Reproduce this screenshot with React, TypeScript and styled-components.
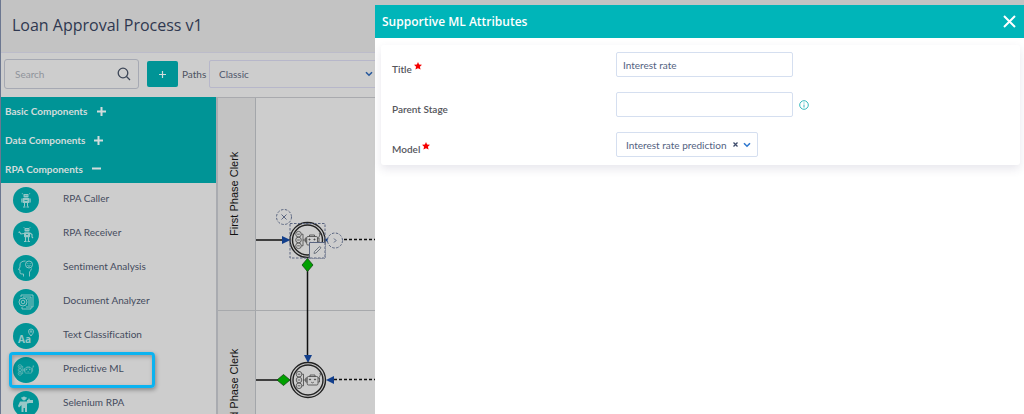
import React from "react";
import styled, { createGlobalStyle } from "styled-components";

const Global = createGlobalStyle`
  *, *::before, *::after { box-sizing: border-box; }
  body {
    margin: 0;
    font-family: Lato, "Open Sans", sans-serif;
    font-size: 10px;
    font-variant-ligatures: none;
    color: #2f3850;
  }
  button, input, select { font: inherit; font-variant-ligatures: none; color: inherit; }
`;

const Shell = styled.div`
  position: relative;
  display: flex;
  flex-direction: column;
  height: 100vh;
  overflow: hidden;
  background: #cdcdcd;
  border-left: 1px solid #6c7790;
`;

const PageHeader = styled.header`
  flex: none;
  display: flex;
  align-items: center;
  height: 53px;
  padding: 0 11px 2px;
  background: #c3c3c3;
  border-bottom: 1px solid #bcbcca;
`;

const PageTitle = styled.h1`
  margin: 0;
  font-family: "Open Sans", sans-serif;
  font-size: 16px;
  line-height: 24px;
  font-weight: 400;
  white-space: nowrap;
`;

const Toolbar = styled.div`
  flex: none;
  display: flex;
  align-items: center;
  height: 44px;
  padding: 0 4px 2px 3px;
`;

const SearchBox = styled.form`
  display: flex;
  align-items: center;
  width: 135px;
  height: 30px;
  padding: 0 7px 0 10px;
  border: 1px solid #a6a9b3;
  border-radius: 3px;
`;

const SearchInput = styled.input`
  flex: 1;
  min-width: 0;
  padding: 0;
  border: 0;
  outline: 0;
  background: none;
  &::placeholder { color: #8f939b; opacity: 1; }
`;

const PlainButton = styled.button`
  display: flex;
  padding: 0;
  border: 0;
  background: none;
  cursor: pointer;
`;

const AddButton = styled.button`
  display: flex;
  align-items: center;
  justify-content: center;
  width: 31px;
  height: 26px;
  margin: 0 4px 0 8px;
  padding: 0;
  border: 0;
  border-radius: 2px;
  background: #009496;
  color: #d5dcdc;
`;

const PathsLabel = styled.label`
  width: 27px;
  color: #4c5260;
`;

const SelectWrap = styled.div<{ $width: number; $gap: number }>`
  position: relative;
  display: flex;
  align-items: center;
  width: ${(p) => p.$width}px;

  & > svg {
    position: absolute;
    right: ${(p) => p.$gap}px;
    pointer-events: none;
  }
`;

const PathSelect = styled.select`
  appearance: none;
  width: 100%;
  height: 28px;
  padding: 0 9px;
  border: 1px solid #b7b7ca;
  border-radius: 2px;
  background: none;
  color: #4d566b;
`;

const Workspace = styled.div`
  flex: 1;
  min-height: 0;
  display: flex;
`;

const Sidebar = styled.nav`
  flex: none;
  width: 215px;
`;

const Sections = styled.div`
  display: flex;
  flex-direction: column;
  height: 86px;
  background: #009496;
`;

const SectionButton = styled.button`
  flex: 1;
  display: flex;
  align-items: center;
  gap: 9px;
  padding: 0 4px;
  border: 0;
  background: none;
  color: #d3dcdc;
  font-weight: 700;
`;

const ComponentList = styled.ul`
  margin: 0;
  padding: 0;
  list-style: none;
`;

const ComponentItem = styled.li<{ $marked: boolean }>`
  position: relative;
  display: flex;
  align-items: center;
  gap: 24px;
  height: 34px;
  padding-left: 12px;
  color: #444b5d;

  &::after {
    content: "";
    display: ${(p) => (p.$marked ? "block" : "none")};
    position: absolute;
    inset: -1px 61px -1px 8px;
    border: 3px solid #0bb3f0;
    border-radius: 4px;
    box-shadow: 1px 2px 4px #00000055, inset 1px 2px 4px #00000040;
  }
`;

const ItemName = styled.span`
  padding-bottom: 5px;
  white-space: nowrap;
`;

const Canvas = styled.main`
  position: relative;
  flex: 1;
  min-width: 0;
  border-top: 1px solid #a9aaae;
  border-left: 2px solid #a9abb0;
`;

const Lane = styled.section<{ $height: number }>`
  display: flex;
  height: ${(p) => p.$height}px;
  border-bottom: 1px solid #a7a9ac;
`;

/* The half turn makes the label read upwards, so its sides are swapped here. */
const LaneTitle = styled.h2`
  display: flex;
  align-items: center;
  justify-content: center;
  width: 38px;
  margin: 0;
  padding: 20px 0 0 6px;
  border-left: 1px solid #a3a6aa;
  background: #c3c3c3;
  color: #111;
  font: 400 11px/16px "Liberation Sans", sans-serif;
  writing-mode: vertical-rl;
  transform: rotate(180deg);
  white-space: nowrap;
`;

const Diagram = styled.svg`
  position: absolute;
  top: 0;
  left: 0;
  overflow: visible;
`;

const Drawer = styled.aside`
  position: absolute;
  top: 5px;
  right: 0;
  bottom: 0;
  left: 374px;
  background: #fff;
`;

const DrawerHeader = styled.header`
  display: flex;
  align-items: center;
  justify-content: space-between;
  height: 33px;
  padding: 0 8px 0 7px;
  background: #00b5b9;
  color: #fff;
`;

const DrawerTitle = styled.h2`
  margin: 0;
  font-family: "Open Sans", sans-serif;
  font-size: 12px;
  line-height: 20px;
  font-weight: 600;
`;

const FormCard = styled.form`
  display: grid;
  grid-auto-rows: 40px;
  margin: 7px 4px 0 6px;
  border-radius: 3px;
  background: #fff;
  box-shadow: 0 4px 10px #3c32641f;
`;

const Field = styled.div`
  display: grid;
  grid-template-columns: 224px 1fr;
  padding: 7px 0 0 11px;
`;

const FieldLabel = styled.label`
  display: flex;
  align-items: flex-start;
  padding-top: 9px;
  line-height: 16px;
  font-weight: 600;
  color: #55565c;

  & > svg { margin: 1px 0 0 2px; }
`;

const Control = styled.div`
  display: flex;
  align-items: center;
  gap: 6px;
  height: 25px;
`;

const TextInput = styled.input`
  width: 177px;
  height: 25px;
  padding: 0 6px;
  border: 1px solid #d5dff0;
  border-radius: 2px;
  background: #fff;
  color: #53627f;
`;

const ModelSelect = styled.select`
  appearance: none;
  width: 100%;
  height: 25px;
  padding: 0 28px 0 9px;
  border: 1px solid #d5dff0;
  border-radius: 2px;
  background: #fff;
  color: #53627f;
`;

const ClearButton = styled(PlainButton)`
  position: absolute;
  right: 20px;
  color: #3d4b6b;
`;

const Chevron = ({ color }: { color: string }) => (
  <svg width="8" height="6" viewBox="0 0 8 6" fill="none" stroke={color} strokeWidth="1.6">
    <path d="M1 1.2 4 4.2 7 1.2" />
  </svg>
);

const Star = () => (
  <svg width="8" height="8" viewBox="0 0 8 8" fill="#f50000" aria-label="required">
    <path d="M4 0 5.1 2.6 8 2.8 5.9 4.7 6.6 7.6 4 6.2 1.4 7.6 2.1 4.7 0 2.8 2.9 2.6Z" />
  </svg>
);

/* Network of three nodes feeding a robot head, drawn round the origin. */
const RobotNetwork = () => (
  <g fill="none" stroke="currentColor" strokeWidth="0.8">
    <circle cx="-9" cy="-5.8" r="2.8" />
    <circle cx="-9" cy="0" r="2.8" />
    <circle cx="-9" cy="5.8" r="2.8" />
    <path d="M-10.3-5.8h2.6M-10.3 0h2.6M-10.3 5.8h2.6M-6-5.8h1.5V5.8H-6M-4.5 0H-1" />
    <path d="M-.8-2h-1.4v4h1.4M10-2h1.5v4H10M11.300-2.500 12.500-5.500" />
    <rect x="-0.8" y="-3.5" width="10.8" height="8.500" rx="1.2" />
    <path d="M2-3.5V-5h5v1.5M3.200 2.200q1.300 1.300 2.600 0" />
    <circle cx="2" cy="-0.5" r="0.6" fill="currentColor" />
    <circle cx="7" cy="-0.5" r="0.6" fill="currentColor" />
    <circle cx="12.5" cy="-6.2" r="0.7" />
  </g>
);

const line = { fill: "none", stroke: "currentColor", strokeWidth: 0.9 };

const glyphs: Record<string, React.ReactNode> = {
  caller: (
    <g fill="currentColor">
      <path d="M10 7.5 9 6M16 7.5 17 6" stroke="currentColor" strokeWidth="0.7" />
      <rect x="10.5" y="7" width="5" height="3.5" rx="0.8" />
      <rect x="9.5" y="11" width="7" height="5" rx="0.8" />
      <path d="M8.8 11.5v4M17.2 11.5v4M11.5 16v3.5M14.5 16v3.5M10 20h2.5M13.5 20H16" stroke="currentColor" strokeWidth="1" fill="none" />
      <path d="M11.8 8.5h.8M13.6 8.5h.8M11.5 13.5h3" stroke="#009496" strokeWidth="0.8" />
    </g>
  ),
  receiver: (
    <g fill="currentColor">
      <path d="M11 6v1M17 6v1" stroke="currentColor" strokeWidth="0.7" />
      <rect x="11.5" y="7" width="5" height="3.5" rx="0.8" />
      <rect x="11" y="11.2" width="6" height="5" rx="0.8" />
      <path d="m11 12.5-3 .5-1.5-2-1 .5M17 12l2 1.5V16l1 1M12.5 16v4M15.5 16v4M11 20.5h2.5M14.5 20.5H17" stroke="currentColor" strokeWidth="1.1" fill="none" />
      <path d="M12.8 8.5h.8M14.6 8.5h.8M13 13.5h2" stroke="#009496" strokeWidth="0.8" />
    </g>
  ),
  sentiment: (
    <g {...line}>
      <path d="M12.5 6Q7 6 7 10v2l-1.500 2.500 1.500.5v3q0 1 2 1h1.500v2.500M16.500 21.500V17q1.500-1.500 2-3.500" />
      <circle cx="16" cy="9.5" r="3.5" />
      <path d="M14.5 10.5q1.5 1.5 3 0M14.8 8.3v.8M17.2 8.3v.8" />
    </g>
  ),
  analyzer: (
    <g {...line}>
      <path d="M8 8V6h12v12h-2M10 8h8v12H9v-2M17 10h-3M17 12h-2M17 14h-2M17 16h-2M17 18h-4" />
      <circle cx="10" cy="13" r="4" />
      <circle cx="10" cy="13" r="1.8" />
    </g>
  ),
  text: (
    <g {...line}>
      <text x="5" y="20" fontSize="10" fontWeight="700" fontFamily="Open Sans, sans-serif" fill="currentColor" stroke="none">Aa</text>
      <path d="M18 13q-2.5-3-2.5-4.5a2.5 2.5 0 0 1 5 0Q20.5 10 18 13Z" />
      <circle cx="18" cy="8.5" r="0.8" />
    </g>
  ),
  predictive: (
    <g transform="translate(12.5 13) scale(.62)"><RobotNetwork /></g>
  ),
  selenium: (
    <g fill="currentColor">
      <circle cx="11" cy="7.5" r="2" />
      <path d="M7 10.5h8.5v2H14V21h-2v-4h-1.5v4h-2v-7L6 16.5 5 15Z" />
      <path d="M14 9h1l1-2 1 2h3v3h-6Z" />
      <path d="M8 7h6" stroke="currentColor" />
    </g>
  ),
};

const items: [string, string][] = [
  ["caller", "RPA Caller"],
  ["receiver", "RPA Receiver"],
  ["sentiment", "Sentiment Analysis"],
  ["analyzer", "Document Analyzer"],
  ["text", "Text Classification"],
  ["predictive", "Predictive ML"],
  ["selenium", "Selenium RPA"],
];

const sections = [
  { name: "Basic Components", open: false },
  { name: "Data Components", open: false },
  { name: "RPA Components", open: true },
];

const StageNode = ({ x, y }: { x: number; y: number }) => (
  <g transform={`translate(${x} ${y})`} color="#444">
    <circle r="17.5" fill="#c8c8c8" stroke="#222" strokeWidth="1.4" />
    <circle r="15" fill="#cdcdcd" stroke="#222" strokeWidth="1.4" />
    <RobotNetwork />
  </g>
);

export default function App() {
  return (
    <>
      <Global />
      <Shell>
        <PageHeader>
          <PageTitle>Loan Approval Process v1</PageTitle>
        </PageHeader>

        <Toolbar>
          <SearchBox>
            <SearchInput placeholder="Search" aria-label="Search" />
            <PlainButton type="button" aria-label="Run search">
              <svg width="14" height="14" viewBox="0 0 14 14" fill="none" stroke="#3d4657" strokeWidth="1.3">
                <circle cx="6" cy="6" r="4.8" />
                <path d="m9.5 9.5 3.5 3.5" />
              </svg>
            </PlainButton>
          </SearchBox>
          <AddButton aria-label="Add path">
            <svg width="7" height="7" viewBox="0 0 7 7" stroke="currentColor" strokeWidth="1.2">
              <path d="M3.5 0v7M0 3.5h7" />
            </svg>
          </AddButton>
          <PathsLabel htmlFor="paths">Paths</PathsLabel>
          <SelectWrap $width={173} $gap={9}>
            <PathSelect id="paths" defaultValue="Classic">
              <option>Classic</option>
            </PathSelect>
            <Chevron color="#27589c" />
          </SelectWrap>
        </Toolbar>

        <Workspace>
          <Sidebar>
            <Sections>
              {sections.map((s) => (
                <SectionButton key={s.name} aria-expanded={s.open}>
                  {s.name}
                  <svg width="9" height="9" viewBox="0 0 9 9" stroke="currentColor" strokeWidth="2">
                    <path d={s.open ? "M0 4.5h9" : "M0 4.5h9M4.5 0v9"} />
                  </svg>
                </SectionButton>
              ))}
            </Sections>
            <ComponentList>
              {items.map(([icon, name]) => (
                <ComponentItem key={icon} $marked={icon === "predictive"}>
                  <svg width="26" height="26" viewBox="0 0 26 26" color="#98c8c8">
                    <circle cx="13" cy="13" r="13" fill="#009496" />
                    {glyphs[icon]}
                  </svg>
                  <ItemName>{name}</ItemName>
                </ComponentItem>
              ))}
            </ComponentList>
          </Sidebar>

          <Canvas>
            <Lane $height={213}>
              <LaneTitle>First Phase Clerk</LaneTitle>
            </Lane>
            <Lane $height={197}>
              <LaneTitle>Second Phase Clerk</LaneTitle>
            </Lane>
            <Diagram width="160" height="316" viewBox="218 98 160 316">
              <g stroke="#111" strokeWidth="1.5">
                <path d="M256 240h28M307.5 270v88M256 380h24" />
                <path d="M344 239.5h34M334 379.5h44" strokeDasharray="3 2" />
              </g>
              <g fill="#123f8c">
                <path d="m282 236 8.5 4-8.5 4Z" />
                <path d="m304 355 4 8 4-8Z" />
                <path d="m334 376-8 4 8 4Z" />
              </g>
              <StageNode x={307.5} y={240} />
              <StageNode x={308} y={380} />
              <path d="m329 236.5-4 3.5 4 3.5Z" fill="#123f8c" />
              <g fill="#00a000" stroke="#114411" strokeWidth="0.8">
                <path d="m307.5 258.5 5.5 6.5-5.5 6.5-5.5-6.5Z" />
                <path d="m277 380 6.5-5.5 6.5 5.5-6.5 5.5Z" />
              </g>
              <g fill="none" stroke="#5a6580" strokeWidth="1">
                <rect x="290" y="223.5" width="35" height="34.5" strokeDasharray="2.5 1.5" />
                <circle cx="284" cy="217" r="7.5" fill="#cdcdcd" strokeDasharray="2.5 1.5" />
                <path d="m281.5 214.5 5 5M286.5 214.5l-5 5" />
                <circle cx="335" cy="240.5" r="7.5" fill="#cdcdcd" strokeDasharray="2.5 1.5" />
                <path d="m334 238.5 2 2-2 2" />
                <path d="M309.5 258v-15.5H325V258Z" fill="#cdcdcd" stroke="none" />
                <path d="M309.5 258v-15.5H325" />
                <path d="M325 242.5V258h-15.5" strokeDasharray="2.5 1.5" />
                <path d="m314 253.500.5-2 4.500-4.500q1-1 1.500 0t0 1.500l-4.500 4.500Z" stroke="#6f7680" />
              </g>
            </Diagram>
          </Canvas>
        </Workspace>

        <Drawer>
          <DrawerHeader>
            <DrawerTitle>Supportive ML Attributes</DrawerTitle>
            <PlainButton aria-label="Close">
              <svg width="13" height="13" viewBox="0 0 13 13" stroke="#fff" strokeWidth="2">
                <path d="m1 1 11 11M12 1 1 12" />
              </svg>
            </PlainButton>
          </DrawerHeader>
          <FormCard>
            <Field>
              <FieldLabel htmlFor="title">Title<Star /></FieldLabel>
              <Control>
                <TextInput id="title" defaultValue="Interest rate" />
              </Control>
            </Field>
            <Field>
              <FieldLabel htmlFor="parent">Parent Stage</FieldLabel>
              <Control>
                <TextInput id="parent" />
                <svg width="10" height="10" viewBox="0 0 10 10" fill="none" stroke="#35b9bd">
                  <circle cx="5" cy="5" r="4.3" />
                  <path d="M5 4.5V7.5M5 2.5v1" />
                </svg>
              </Control>
            </Field>
            <Field>
              <FieldLabel htmlFor="model">Model<Star /></FieldLabel>
              <Control>
                <SelectWrap $width={142} $gap={7}>
                  <ModelSelect id="model" defaultValue="Interest rate prediction">
                    <option>Interest rate prediction</option>
                  </ModelSelect>
                  <ClearButton type="button" aria-label="Clear model">
                    <svg width="5" height="5" viewBox="0 0 5 5" stroke="currentColor" strokeWidth="1.3">
                      <path d="m.5.5 4 4M4.5.5l-4 4" />
                    </svg>
                  </ClearButton>
                  <Chevron color="#2f78cf" />
                </SelectWrap>
              </Control>
            </Field>
          </FormCard>
        </Drawer>
      </Shell>
    </>
  );
}
